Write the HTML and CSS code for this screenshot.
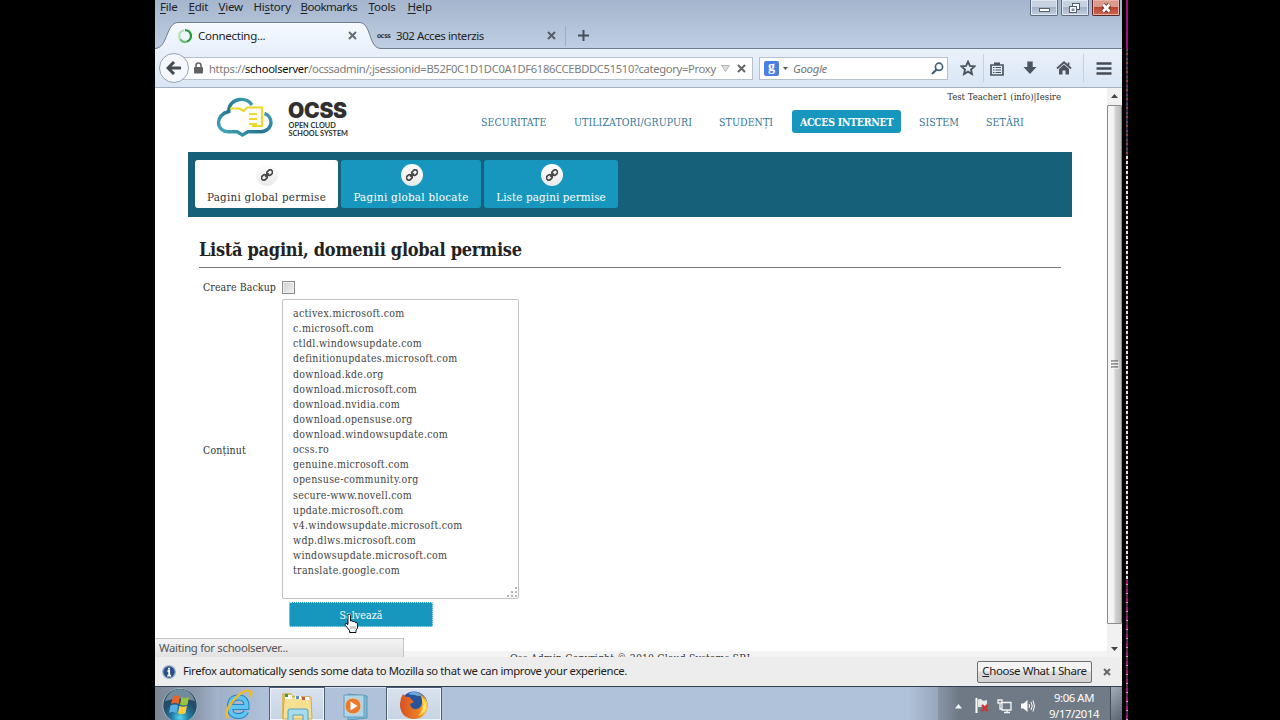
FILE: index.html
```html
<!DOCTYPE html>
<html lang="ro">
<head>
<meta charset="utf-8">
<title>OCSS Admin</title>
<link rel="stylesheet" href="styles.css">
</head>
<body>
<div class="stage">
<div class="desktop">
  <header class="titlebar">
    <div class="menu-row">
      <nav class="menu"><span class="m1"><u>F</u>ile</span><span class="m2"><u>E</u>dit</span><span class="m3"><u>V</u>iew</span><span class="m4">Hi<u>s</u>tory</span><span class="m5"><u>B</u>ookmarks</span><span class="m6"><u>T</u>ools</span><span class="m7"><u>H</u>elp</span></nav>
      <div class="win-buttons">
        <span class="win-btn"><svg width="28" height="16"><rect x="9.5" y="8.5" width="10" height="3" fill="#fff" stroke="#566171"/></svg></span>
        <span class="win-btn"><svg width="28" height="16" fill="#fff" stroke="#4f5a6a"><rect x="11.5" y="3.5" width="7" height="6"/><rect x="8.5" y="6.500" width="7" height="6"/><rect x="11" y="9" width="2" height="1.500" stroke-width=".8"/></svg></span>
        <span class="win-btn close"><svg width="28" height="16"><path d="M11 4.500l6.500 7M17.500 4.500l-6.500 7" stroke="#5b2a2a" stroke-width="4.500"/><path d="M11 4.500l6.500 7M17.500 4.500l-6.500 7" stroke="#fff" stroke-width="2.700"/></svg></span>
      </div>
    </div>
    <div class="tabs">
      <svg class="tab-shape" width="967" height="27" viewBox="0 0 967 27"><defs><linearGradient id="tab" x2="0" y2="1"><stop stop-color="#f6faff"/><stop offset="1" stop-color="#e9f1fb"/></linearGradient></defs><path d="M0 27V26.500C13 26 11 .5 23 .5H204C217 .5 213 26.500 226 26.500H967V27Z" fill="url(#tab)"/><path d="M0 26.500C13 26 11 .5 23 .5H204C217 .5 213 26.500 226 26.500H967" fill="none" stroke="#6d7c8f"/></svg>
      <div class="tab first">
        <svg class="spinner" width="16" height="16" fill="none" stroke-width="2.300"><path d="M8 2.200A5.800 5.800 0 0 1 10 13.500" stroke="#249b38"/><path d="M10 13.500A5.800 5.800 0 0 1 3 11" stroke="#6abf72"/><path d="M3 11A5.800 5.800 0 0 1 7 2.300" stroke="#b9dfbd"/></svg>
        <span class="tab-title">Connecting...</span>
        <svg class="x" width="9" height="9"><path d="M1 1l7 7M8 1l-7 7" stroke="#666d76" stroke-width="2"/></svg>
      </div>
      <div class="tab second">
        <span class="mini">OCSS</span>
        <span class="tab-title">302 Acces interzis</span>
        <svg class="x" width="9" height="9"><path d="M1 1l7 7M8 1l-7 7" stroke="#555d66" stroke-width="2"/></svg>
      </div>
      <svg class="plus" width="11" height="11"><path d="M5.500 0v11M0 5.500h11" stroke="#454f5c" stroke-width="2"/></svg>
    </div>
  </header>

  <div class="toolbar">
    <span class="back"><svg width="16" height="14"><path d="M8 1L2 7l6 6M2 7h13" fill="none" stroke="#464c53" stroke-width="3"/></svg></span>
    <div class="address">
      <svg width="9" height="12"><path d="M2 6V3.500a2.500 2.500 0 0 1 5 0V6" fill="none" stroke="#666" stroke-width="1.600"/><rect y="5" width="9" height="6.500" rx="1" fill="#626262"/></svg>
      <span class="url">https://<b>schoolserver</b>/ocssadmin/;jsessionid=B52F0C1D1DC0A1DF6186CCEBDDC51510?category=Proxy</span>
      <svg class="drop" width="9" height="7"><path d="M.5 .5h8l-4 6z" fill="#ddd" stroke="#b5b5b5"/></svg>
      <svg width="9" height="9"><path d="M1 1l7 7M8 1l-7 7" stroke="#666" stroke-width="2"/></svg>
    </div>
    <div class="search">
      <span class="g">g</span>
      <svg width="5" height="3"><path d="M0 0h5L2.500 3z" fill="#555"/></svg>
      <i>Google</i>
      <svg class="lens" width="13" height="13" fill="none" stroke="#45637f"><circle cx="8" cy="4.800" r="3.600" stroke-width="1.700"/><path d="M5.500 7.500L1 12" stroke-width="2.300"/></svg>
    </div>
    <div class="tools">
      <svg width="16" height="16"><path d="M8 1.700l1.900 4.200 4.500.5-3.400 3.100 1 4.500-4-2.300-4 2.300 1-4.500L1.600 6.400l4.500-.5z" fill="none" stroke="#4c555f" stroke-width="1.900"/></svg>
      <i class="sep s1"></i>
      <svg class="clip" width="14" height="15"><path d="M1 4h12v10H1z" fill="none" stroke="#4c555f" stroke-width="1.700"/><path d="M4 4V1.500h6V4z" fill="#4c555f"/><path d="M3 6.500h1.500M5.500 6.500H11M3 9h1.500M5.500 9H11M3 11.500h1.500M5.500 11.500H11" stroke="#4c555f" stroke-width="1.200"/></svg>
      <svg class="down" width="14" height="14"><path d="M4.300 .5h5.400v5.500H13.500L7 13 .5 6h3.800z" fill="#4c555f"/></svg>
      <svg class="home" width="16" height="14"><path d="M1 7.500L8 1.300l7 6.200" fill="none" stroke="#4c555f" stroke-width="1.800"/><path d="M3 8l5-4.500L13 8v5.500H9.500V9.500h-3v4H3z" fill="#4c555f"/><path d="M12.500 1.500v3" stroke="#4c555f" stroke-width="1.800"/></svg>
      <i class="sep s2"></i>
      <svg class="burger" width="16" height="13"><path d="M.5 1.500h15M.5 6.500h15M.5 11.500h15" stroke="#454c55" stroke-width="2.600"/></svg>
    </div>
  </div>

  <div class="viewport">
    <main class="page">
      <div class="user">Test Teacher1 (info)|Ieșire</div>
      <div class="brand-row">
        <svg class="cloud" width="58" height="40" fill="none"><defs><linearGradient id="cg" x1="0" y1="1" x2="1" y2="0"><stop stop-color="#49b2c3"/><stop offset=".45" stop-color="#23748f"/><stop offset="1" stop-color="#4fb3c4"/></linearGradient></defs><path d="M36 8C33 3.500 28 2 23.500 2.500C17 3.500 12.500 8 12.800 14.500C6 16 2.500 21 2.500 25.500C2.500 31 7 34.800 12 34.800H21L26.500 38L32 34.800H45C51 34.500 55 30 55 25.500C55 21 52 17.500 48.500 16.500" stroke="url(#cg)" stroke-width="3.400"/><path d="M14 11.500H23.500L27.500 14L31 10.500H46V29H36" stroke="#efd82e" stroke-width="2.200"/><path d="M33 17h8M33 22h8M33 27h8" stroke="#efd82e" stroke-width="1.800"/></svg>
        <div class="brand"><strong>OCSS</strong><span>OPEN CLOUD</span><span>SCHOOL SYSTEM</span></div>
        <nav class="site-nav"><span class="n1">SECURITATE</span><span class="n2">UTILIZATORI/GRUPURI</span><span class="n3">STUDENȚI</span><span class="n4 on">ACCES INTERNET</span><span class="n5">SISTEM</span><span class="n6">SETĂRI</span></nav>
      </div>
      <div class="band">
        <a class="card current"><span class="disc"><svg width="12" height="12" viewBox="0 0 12 12"><g transform="rotate(-42 6 6)" fill="none" stroke="#454545" stroke-width="1.700"><rect x="-.5" y="3.700" width="5.700" height="4.600" rx="2.100"/><rect x="6.800" y="3.700" width="5.700" height="4.600" rx="2.100"/><path d="M3.500 6h5"/></g></svg></span><span class="ct">Pagini global permise</span></a>
        <a class="card two"><span class="disc"><svg width="12" height="12" viewBox="0 0 12 12"><g transform="rotate(-42 6 6)" fill="none" stroke="#454545" stroke-width="1.700"><rect x="-.5" y="3.700" width="5.700" height="4.600" rx="2.100"/><rect x="6.800" y="3.700" width="5.700" height="4.600" rx="2.100"/><path d="M3.500 6h5"/></g></svg></span><span class="ct">Pagini global blocate</span></a>
        <a class="card three"><span class="disc"><svg width="12" height="12" viewBox="0 0 12 12"><g transform="rotate(-42 6 6)" fill="none" stroke="#454545" stroke-width="1.700"><rect x="-.5" y="3.700" width="5.700" height="4.600" rx="2.100"/><rect x="6.800" y="3.700" width="5.700" height="4.600" rx="2.100"/><path d="M3.500 6h5"/></g></svg></span><span class="ct">Liste pagini permise</span></a>
      </div>
      <h1><span>Listă pagini, domenii global permise</span></h1>
      <div class="backup"><span>Creare Backup</span><i class="check"></i></div>
      <div class="content-row">
        <span class="label">Conținut</span>
        <div class="area">
          <div>activex.microsoft.com</div><div>c.microsoft.com</div><div>ctldl.windowsupdate.com</div><div>definitionupdates.microsoft.com</div><div>download.kde.org</div><div>download.microsoft.com</div><div>download.nvidia.com</div><div>download.opensuse.org</div><div>download.windowsupdate.com</div><div>ocss.ro</div><div>genuine.microsoft.com</div><div>opensuse-community.org</div><div>secure-www.novell.com</div><div>update.microsoft.com</div><div>v4.windowsupdate.microsoft.com</div><div>wdp.dlws.microsoft.com</div><div>windowsupdate.microsoft.com</div><div>translate.google.com</div>
          <svg class="grip" width="12" height="12" fill="#b5b5b5"><path d="M9 1h2v2H9zM5 5h2v2H5zM9 5h2v2H9zM1 9h2v2H1zM5 9h2v2H5zM9 9h2v2H9z"/></svg>
        </div>
      </div>
      <div class="save">Salvează
        <svg class="pointer" width="15" height="21"><path d="M4 11V2.500Q4 1 5.200 1T6.500 2.500V8Q8.300 7.200 8.800 8.500Q10.600 7.800 11 9.300Q13.500 8.800 13.500 11V15L12 17.500V19.500H5.500V17.500L1.500 12.500Q.5 11 1.800 10.300Q3 10 4 12" fill="#fff" stroke="#111"/><path d="M7 13v3M9 13v3M11 13v3" stroke="#777" stroke-width=".7"/></svg>
      </div>
      <footer><span>Oss Admin Copyright © 2010 Cloud Systems SRL</span></footer>
    </main>
    <aside class="scroll">
      <svg width="15" height="17"><path d="M4 10l3.500-4L11 10z" fill="#444"/></svg>
      <div class="thumb"><svg width="8" height="9"><path d="M0 1h7M0 4h7M0 7h7" stroke="#444"/><path d="M1 2.200h7M1 5.200h7M1 8.200h7" stroke="#fff" stroke-width=".8"/></svg></div>
      <svg class="sdown" width="15" height="17"><path d="M4 8h7l-3.500 4z" fill="#444"/></svg>
    </aside>
    <div class="status"><span>Waiting for schoolserver...</span></div>
  </div>

  <div class="notice">
    <svg width="14" height="14"><circle cx="7" cy="7" r="6.300" fill="#285089" stroke="#9fb2d0" stroke-width="1.200"/><path d="M7 2.800v2M5.500 6H7.200v4.500M5.300 10.700h3.800" stroke="#fff" stroke-width="1.800" fill="none"/></svg>
    <span class="notice-text">Firefox automatically sends some data to Mozilla so that we can improve your experience.</span>
    <span class="choose"><span><u>C</u>hoose What I Share</span></span>
    <svg class="nx" width="8" height="8"><path d="M1 1l6 6M7 1l-6 6" stroke="#666" stroke-width="2"/></svg>
  </div>

  <div class="taskbar">
    <div class="start"><svg width="38" height="33"><defs><radialGradient id="orb" cy=".85"><stop stop-color="#55d6ef"/><stop offset=".5" stop-color="#227aa4"/><stop offset="1" stop-color="#264c67"/></radialGradient></defs><circle cx="19" cy="18.500" r="17.200" fill="url(#orb)" stroke="#9fb5c2"/><path d="M4 14Q8 2 19 2T34 14Q19 9 4 14Z" fill="#fff" opacity=".35"/><g transform="translate(0 -1)"><path d="M12 11q3-2.500 7-.5l-1.500 7.500q-3.500-2-7.500 0z" fill="#e9632b"/><path d="M20.500 11q3.500 2 7.500 0l-1.500 7.500q-4 2-7.500 0z" fill="#9ac43f"/><path d="M9.500 19.500q4-2 7.500 0l-1.500 7.500q-4-2-7.500 0z" fill="#55b1e4"/><path d="M18.500 19.800q3.500 2 7.500 0l-1.500 7.500q-4 2-7.500 0z" fill="#fbcb3b"/></g></svg></div>
    <div class="ie"><svg width="34" height="33" fill="none"><path d="M9.500 20H24.500Q25 10.500 16.500 10.500T8 20T17 29Q22 29 24.300 24.500" stroke="#2386c6" stroke-width="6"/><path d="M9.500 20H24.500Q25 10.500 16.500 10.500T8 20T17 29Q22 29 24.300 24.500" stroke="#62c5f0" stroke-width="3.800"/><path d="M6 31Q1 26 11 14T27 4Q31 4 28 10" stroke="#edbb2f" stroke-width="2.600"/></svg></div>
    <div class="task active files"><svg width="32" height="31"><path d="M1 29V5Q1 3 3 3H10L13 6H29V29Z" fill="#d9bb61"/><path d="M3 10L6 7H30L31 29H2Z" fill="#f5df91" stroke="#d1ad4b"/><path d="M4 5h7v4H4zM14 6h6v3h-6zM22 7h6v3h-6z" fill="#fff"/><path d="M4 4h3v3H4z" fill="#3a9d48"/><path d="M15 6h3v3h-3z" fill="#4d96ce"/><path d="M21 7h3v3h-3z" fill="#c55b3d"/><path d="M7 31V21Q7 19 9 19H25Q27 19 27 21V31H22V25H12V31Z" fill="#a7dcef" stroke="#559fc5"/></svg></div>
    <div class="media"><svg width="29" height="30"><path d="M6 3l19 2v22L6 29z" fill="#7eb9d5" stroke="#5798b8"/><path d="M2 4h20v22H2z" fill="#afd5e6" stroke="#699fba"/><circle cx="11" cy="15" r="8" fill="#e9792c" stroke="#d9d0b8"/><path d="M8.500 10.500v9l7-4.500z" fill="#fff"/></svg></div>
    <div class="task active fox"><svg width="32" height="31"><defs><linearGradient id="fox" x2="1"><stop stop-color="#d95022"/><stop offset=".7" stop-color="#ee8224"/><stop offset="1" stop-color="#ffd144"/></linearGradient></defs><circle cx="16" cy="15" r="13.500" fill="#29549a"/><path d="M10 4Q17-1 24 5Q20 7 17 5Q13 5 10 4Z" fill="#6ca6dd"/><path d="M3 8L5 4L8 7Q12 6 13 9L16 12L12 14Q13 20 19 19Q25 17 24 10L22 4Q31 9 29.500 18Q27 29 16 29Q2 28 2 14Z" fill="url(#fox)"/><path d="M24 8Q29 12 28 19Q26 24 20 26Q27 20 24 8Z" fill="#ffe161"/></svg></div>
    <div class="task-space"></div>
    <div class="tray">
      <svg width="8" height="5"><path d="M0 4.500h7L3.500 0z" fill="#f5f5f5"/></svg>
      <svg class="flag" width="14" height="15"><path d="M1.500 0v15" stroke="#fff" stroke-width="2"/><path d="M3 1.500q3-1 4 .5t5 0v7H3z" fill="#e6e8ea"/><path d="M7 7l5.500 6M12.500 7L7 13" stroke="#cf3434" stroke-width="2.500"/></svg>
      <svg class="net" width="16" height="15" fill="none" stroke="#f4f4f4" stroke-width="1.300"><path d="M5 3.500h9v7.500H5zM7 13.500h6M10 11v2.500M3 5v5h2M1 1h4v3H1z"/></svg>
      <svg class="vol" width="15" height="14"><path d="M1 4.500h2.500L7.500 1v12L3.500 9.500H1z" fill="#fff"/><path d="M9 5q1.200 2 0 4M11 3q2.600 4 0 8M13 1.500q3 5.500 0 11" fill="none" stroke="#fff"/></svg>
      <div class="clock"><span>9:06 AM</span><span>9/17/2014</span></div>
      <div class="show"></div>
    </div>
  </div>
</div>
<div class="edge"><i class="seg1"></i><i class="seg2"></i><i class="seg3"></i><i class="seg4"></i></div>
</div>
</body>
</html>
```
FILE: styles.css
```css
* { box-sizing: border-box; }
body { margin: 0; background: #000; font-family: "Noto Sans", sans-serif; font-size: 11.500px; color: #222; overflow: hidden; }
svg { display: block; flex: none; }
span { white-space: nowrap; }
.stage { display: flex; width: 1280px; height: 720px; overflow: hidden; padding-left: 155px; background: #000; }
.desktop { width: 967px; height: 720px; flex: none; display: flex; flex-direction: column; overflow: hidden; }
.titlebar { height: 49px; flex: none; background: linear-gradient(#a4b5cd, #c0cfe2); display: flex; flex-direction: column; }
.menu-row { display: flex; justify-content: space-between; height: 22px; padding-left: 5px; }
.menu { display: flex; height: 14px; line-height: 13px; letter-spacing: -.2px; }
.menu u { text-underline-offset: 2px; }
.m1 { width: 28.500px; } .m2 { width: 30px; } .m3 { width: 35px; } .m4 { width: 47px; } .m5 { width: 68px; letter-spacing: -.5px; } .m6 { width: 39px; }
.win-buttons { display: flex; gap: 3px; padding-right: 2px; }
.win-btn { width: 28px; height: 16px; border: 1px solid #5d6b7e; border-top: 0; border-radius: 0 0 2px 2px; background: linear-gradient(#c7d2e0 45%, #a4b3c8 50%, #c3cfdf); box-shadow: inset 0 0 0 1px #e1e8f2; }
.win-btn svg { margin-left: -1px; }
.win-btn.close { background: linear-gradient(#dc9a8c 45%, #bb4430 50%, #cf6a4e); border-color: #5b262a; box-shadow: inset 0 0 0 1px #e8b3a6; }
.tabs { height: 27px; position: relative; display: flex; align-items: center; color: #222; }
.tab-shape { position: absolute; left: 0; top: 0; }
.tab { position: relative; display: flex; align-items: center; height: 27px; }
.first { width: 222px; padding-left: 22px; }
.first .tab-title { width: 150px; margin-left: 5px; letter-spacing: -.28px; }
.second { width: 189px; border-right: 1px solid #9eadc1; height: 20px; }
.second .tab-title { width: 151px; letter-spacing: -.42px; }
.mini { width: 19px; font: bold 5px "DejaVu Sans", sans-serif; letter-spacing: -.4px; }
.plus { margin-left: 12px; position: relative; }
.toolbar { height: 39px; flex: none; background: linear-gradient(#e9f1fb, #dae6f5); border-bottom: 1px solid #a3b0c0; display: flex; align-items: center; padding-left: 4px; }
.back { z-index: 1; width: 30px; height: 30px; border: 1px solid #98a3b1; border-radius: 50%; background: #f4f8fd; display: grid; place-items: center; flex: none; }
.address { width: 572px; height: 23px; margin-left: -8px; padding-left: 12px; display: flex; align-items: center; background: #fff; border: 1px solid #b7c1ce; flex: none; }
.url { width: 510px; margin-left: 6px; overflow: hidden; color: #7b7b7b; font-size: 11.200px; letter-spacing: -.32px; }
.url b { color: #111; font-weight: 400; }
.drop { margin: 0 7px 0 2px; }
.search { width: 189px; height: 23px; margin-left: 6px; padding-left: 4px; display: flex; align-items: center; background: #fff; border: 1px solid #b7c1ce; flex: none; }
.g { width: 15px; height: 15px; margin-right: 4px; border-radius: 2px; background: #4c7fe3; color: #fff; font: bold 14px/12px "Liberation Serif", serif; text-align: center; }
.search i { width: 138px; margin-left: 5px; color: #777; letter-spacing: -.35px; }
.tools { display: flex; align-items: center; padding-left: 12px; }
.sep { width: 1px; height: 28px; background: #c5d1e0; }
.s1 { margin-left: 7px; } .clip { margin-left: 6px; } .down { margin-left: 19px; } .home { margin-left: 19px; } .s2 { margin-left: 11px; } .burger { margin-left: 12px; }
.viewport { height: 569px; flex: none; display: flex; position: relative; background: #fff; }
.page { width: 952px; height: 569px; overflow: hidden; font-family: "DejaVu Serif Condensed", "DejaVu Serif", serif; font-stretch: condensed; font-size: 10.500px; color: #333; }
.user { height: 10px; padding: 3px 46px 0 0; line-height: 11px; text-align: right; font-size: 9.500px; letter-spacing: -.01px; }
.brand-row { height: 54px; display: flex; padding-left: 61px; }
.cloud { margin-top: -1px; }
.brand { width: 66px; margin-left: 14px; padding-top: 1px; display: flex; flex-direction: column; color: #303030; }
.brand strong { height: 23px; font: 900 21px/23px Inter, sans-serif; letter-spacing: -.3px; }
.brand span { font: 700 7.300px/8px Lato, sans-serif; padding-left: .5px; }
.site-nav { display: flex; align-items: flex-start; margin-left: 127px; padding-top: 12px; line-height: 24px; color: #367799; font-size: 10.500px; letter-spacing: .08px; }
.n1 { width: 93px; } .n2 { width: 145px; } .n3 { width: 73px; }
.n4 { width: 109px; height: 23px; margin-right: 18px; text-align: center; font-weight: bold; letter-spacing: -.32px; color: #fff; background: #1797bd; border-radius: 3px; }
.n5 { width: 67px; }
.band { margin: 0 35px 0 33px; height: 65px; padding: 8px 7px; display: flex; gap: 3px; background: #176079; }
.card { height: 48px; border-radius: 3px; padding-top: 4px; display: flex; flex-direction: column; align-items: center; background: #1797bd; color: #fff; font-size: 11.500px; line-height: 22px; letter-spacing: .26px; }
.current { width: 143px; background: #fff; color: #333; } .two { width: 140px; } .three { width: 134px; letter-spacing: .12px; }
.two .disc, .three .disc { margin-left: 2px; }
.disc { width: 22px; height: 22px; flex: none; border-radius: 50%; display: grid; place-items: center; background: linear-gradient(#fff, #e9e9e9); }
h1 { margin: 0 46px 0 44px; height: 51px; padding-top: 19px; border-bottom: 1px solid #777; font-size: 18px; line-height: 27px; color: #222; letter-spacing: -.28px; }
.backup { display: flex; align-items: center; height: 31px; padding: 7px 0 0 48px; }
.backup span { width: 79px; letter-spacing: .09px; }
.check { width: 13px; height: 13px; border: 1px solid #8c8c8c; background: linear-gradient(135deg, #ccc, #f4f4f4); box-shadow: inset 0 0 0 1px #eee; }
.content-row { display: flex; align-items: center; height: 300px; padding-left: 48px; }
.label { width: 79px; padding-top: 1px; letter-spacing: .15px; }
.area { width: 237px; height: 300px; padding: 6px 10px; border: 1px solid #c2c2c2; border-radius: 2px; position: relative; line-height: 15.120px; color: #444; letter-spacing: .3px; }
.grip { position: absolute; right: 0; bottom: 0; }
.save { width: 144px; height: 25px; margin: 3px 0 0 134px; border: 1px dotted #d8eef5; background: #1797bd; color: #fff; border-radius: 2px; text-align: center; line-height: 24px; position: relative; letter-spacing: .1px; }
.pointer { position: absolute; left: 54px; top: 10px; }
footer { margin-top: 24px; height: 6px; padding-left: 355px; background: #f3f3f3; line-height: 14px; overflow: hidden; letter-spacing: .1px; }
.scroll { width: 15px; background: #f1f1f1; display: flex; flex-direction: column; }
.thumb { height: 519px; border: 1px solid #8c8c8c; border-radius: 1px; background: linear-gradient(90deg, #f5f5f5 40%, #cfcfcf 60%, #bcbcbc); display: grid; place-items: center; }
.sdown { margin-top: 15px; }
.status { position: absolute; left: 0; bottom: 0; width: 249px; height: 19px; padding-left: 4px; border: 1px solid #c5c5c5; border-left: 0; border-bottom: 0; background: linear-gradient(#f4f4f4, #e2e2e2); color: #555; line-height: 18px; font-size: 11.300px; letter-spacing: -.28px; }
.notice { height: 29px; flex: none; background: #ededed; display: flex; align-items: center; padding-left: 7px; }
.notice-text { width: 787px; margin: -2px 0 0 7px; font-size: 11.300px; letter-spacing: -.35px; }
.choose { width: 115px; height: 22px; margin-left: 7px; border: 1px solid #707070; border-radius: 2px; line-height: 18px; text-align: center; letter-spacing: -.43px; background: linear-gradient(#f4f4f4 45%, #dcdcdc 50%, #d2d2d2); }
.nx { margin-left: 11px; }
.taskbar { height: 34px; flex: none; border-top: 1px solid #333f52; display: flex; background: #b0c2da; box-shadow: inset 0 1px #d6e1ef; overflow: hidden; }
.start { width: 64px; padding-left: 6px; background: linear-gradient(90deg, #7d8796, #8b99ac 65%, #a5b5cb); }
.ie { width: 50px; padding-left: 3px; background: linear-gradient(90deg, #a0b0c6, #b0c2da); }
.task.active { border: 1px solid #4e5f75; border-bottom: 0; background: linear-gradient(#d9e3ef, #c5d3e4); box-shadow: inset 0 0 0 1px #eef4fb; }
.files { width: 56px; padding: 2px 0 0 11px; }
.media { width: 61px; padding: 4px 0 0 17px; }
.fox { width: 56px; padding: 2px 0 0 11px; }
.task-space { width: 496px; background: linear-gradient(90deg, #b0c2da 94%, #97a7bb); flex: none; }
.tray { width: 184px; flex: none; display: flex; align-items: flex-start; padding-left: 17px; background: linear-gradient(90deg, #8896a8, #6f7985 12%, #717b87); color: #fff; }
.tray > svg:first-child { margin-top: 17px; }
.flag { margin: 11px 0 0 12px; } .net { margin: 12px 0 0 8px; } .vol { margin: 12px 0 0 7px; }
.clock { width: 62px; margin-left: 13px; padding-top: 3px; display: flex; flex-direction: column; align-items: center; font-size: 11.300px; line-height: 16px; letter-spacing: -.4px; }
.show { width: 14px; height: 34px; margin-left: 10px; border-left: 1px solid #414b58; background: linear-gradient(135deg, #a4adb8, #56616f); }
.edge { width: 2px; height: 720px; margin-left: 4px; display: flex; flex-direction: column; }
.seg1 { height: 49px; background: #a3107c; }
.seg2 { height: 107px; background: repeating-linear-gradient(#713b71 0 2px, #273f3d 2px 4px, #a03b55 4px 6px, #332c44 6px 9px); }
.seg3 { height: 424px; background: repeating-linear-gradient(#eadfe9 0 3px, #35212f 3px 5px); }
.seg4 { height: 140px; background: repeating-linear-gradient(#a11978 0 4px, #bfa9bd 4px 5px, #542d4d 5px 9px); }
```
